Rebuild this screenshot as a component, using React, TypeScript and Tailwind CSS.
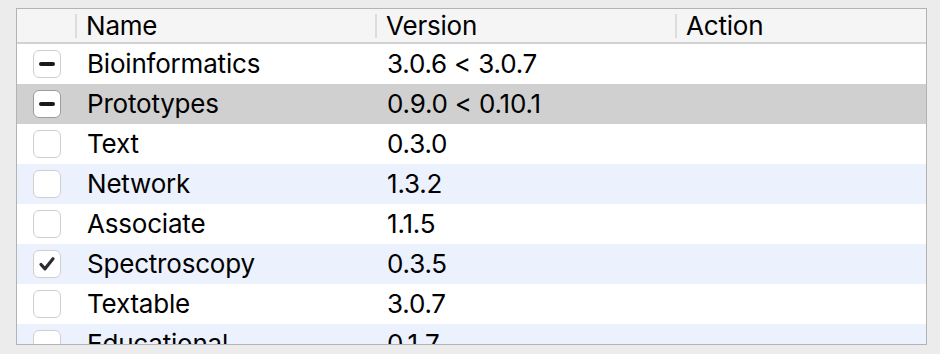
type Mark = "none" | "partial" | "checked";

const rows: { name: string; version: string; mark: Mark }[] = [
  { name: "Bioinformatics", version: "3.0.6 < 3.0.7", mark: "partial" },
  { name: "Prototypes", version: "0.9.0 < 0.10.1", mark: "partial" },
  { name: "Text", version: "0.3.0", mark: "none" },
  { name: "Network", version: "1.3.2", mark: "none" },
  { name: "Associate", version: "1.1.5", mark: "none" },
  { name: "Spectroscopy", version: "0.3.5", mark: "checked" },
  { name: "Textable", version: "3.0.7", mark: "none" },
  { name: "Educational", version: "0.1.7", mark: "none" },
];

const selected = 1;

function Checkbox({ mark, active }: { mark: Mark; active: boolean }) {
  return (
    <div
      className={`flex h-[28px] w-[28px] items-center justify-center rounded-[6px] border bg-white ${
        active ? "border-[#9c9c9c]" : "border-[#cfcfcf]"
      }`}
    >
      {mark === "partial" && <div className="h-[4px] w-[16px] rounded-full bg-[#1a1a1a]" />}
      {mark === "checked" && (
        <svg width="18" height="16" viewBox="0 0 18 16" fill="none">
          <path
            d="M3 8.5 L7 12.8 L15 2.8"
            stroke="#2b2b36"
            strokeWidth="3.2"
            strokeLinecap="round"
            strokeLinejoin="round"
          />
        </svg>
      )}
    </div>
  );
}

function HeaderCell({ label, className }: { label: string; className: string }) {
  return (
    <div className={`flex h-full items-center ${className}`}>
      <div className="h-[24px] w-[2px] bg-[#dcdcdc]" />
      <span className="pl-[9px]">{label}</span>
    </div>
  );
}

export default function App() {
  return (
    <div
      className="h-[354px] w-[940px] bg-[#ececec] pl-[16px] pt-[8px] text-[26px] leading-none tracking-[-0.2px] text-black"
      style={{ fontFamily: "Inter, 'Noto Sans', sans-serif" }}
    >
      <div className="h-[337px] w-[911px] overflow-hidden border border-[#b3b3b3] bg-white">
        <div className="flex h-[35px] border-b-2 border-[#d2d2d2] bg-[#f5f5f5]">
          <div className="w-[58px]" />
          <HeaderCell label="Name" className="w-[300px]" />
          <HeaderCell label="Version" className="w-[300px]" />
          <HeaderCell label="Action" className="flex-1" />
        </div>
        {rows.map((row, i) => (
          <div
            key={row.name}
            className={`flex h-[40px] items-center ${
              i === selected ? "bg-[#d0d0d0]" : i % 2 === 1 ? "bg-[#ebf1fd]" : "bg-white"
            }`}
          >
            <div className="flex w-[58px] justify-center pl-[1px]">
              <Checkbox mark={row.mark} active={i === selected} />
            </div>
            <div className="w-[300px] pl-[12px]">{row.name}</div>
            <div className="w-[300px] pl-[12px]">{row.version}</div>
            <div className="flex-1" />
          </div>
        ))}
      </div>
    </div>
  );
}
